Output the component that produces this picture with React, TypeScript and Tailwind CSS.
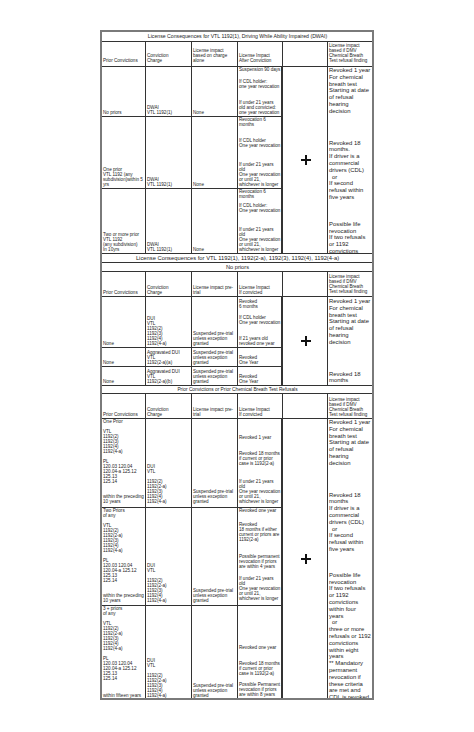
import React from "react";

function Ln({ t, className = "" }: { t: string[]; className?: string }) {
  return (
    <div className={className}>
      {t.map((s, i) => (
        <div key={i} className={s.startsWith(" ") ? "whitespace-nowrap pl-[3px]" : "whitespace-nowrap"}>
          {s.trim() === "" ? "\u00a0" : s.trim()}
        </div>
      ))}
    </div>
  );
}

const SM = "text-[4.6px] leading-[5px]";
const BIG = "text-[5.9px] leading-[6.8px]";

function C({ children, className = "" }: { children?: React.ReactNode; className?: string }) {
  return <div className={`bg-white overflow-hidden min-w-0 min-h-0 text-[#1c1c1c] pl-[1px] ${className}`}>{children}</div>;
}

function Plus() {
  return (
    <svg width="10" height="10" viewBox="0 0 10 10">
      <rect x="4" y="0" width="2" height="10" fill="#111" />
      <rect x="0" y="4" width="10" height="2" fill="#111" />
    </svg>
  );
}

const col6Head = ["License impact", "based if DMV", "Chemical Breath", "Test refusal finding"];

const reviewA = ["Revoked 1 year", "For chemical", "breath test", "Starting at date", "of refusal", "hearing", "decision"];
const reviewB = ["Revoked 18", "months.", "If driver is a", "commercial", "drivers (CDL)", " or", "If second", "refusal within", "five years"];

const under21 = ["If under 21 years", "old", "One year revocation", "or until 21,", "whichever is longer"];
const dui = ["DUI", "VTL", "", "1192(2)", "1192(2-a)", "1192(3)", "1192(4)", "1192(4-a)"];
const susp = ["Suspended pre-trial", "unless exception", "granted"];
const plList = ["", "PL", "120.03 120.04", "120.04-a 125.12", "125.13", "125.14"];

export default function App() {
  return (
    <div className="min-h-[732px] bg-white pt-[30px] font-['Liberation_Sans',Arial,sans-serif]">
      <div className="mx-auto w-[274px] border-2 border-[#7a7a7a] bg-[#333] grid gap-px grid-cols-[43px_45px_45px_44px_44px_44px] grid-rows-[9px_24px_49px_71px_64px_8px_8px_24px_50px_18px_18px_7px_24px_88px_97px_92px]">
        {/* Section 1 */}
        <C className="col-span-6 text-center text-[5.2px] leading-[9px] pl-0">
          License Consequences for VTL 1192(1), Driving While Ability Impaired (DWAI)
        </C>
        <C className={`${SM} flex flex-col justify-end pb-[3px]`}><Ln t={["Prior Convictions"]} /></C>
        <C className={`${SM} flex flex-col justify-end pb-[3px]`}><Ln t={["Conviction", "Charge"]} /></C>
        <C className={`${SM} flex flex-col justify-end pb-[3px]`}><Ln t={["License impact", "based on charge", "alone"]} /></C>
        <C className={`${SM} flex flex-col justify-end pb-[3px]`}><Ln t={["License Impact", "After Conviction"]} /></C>
        <C />
        <C className={`${SM} flex flex-col justify-end pb-[3px]`}><Ln t={col6Head} /></C>

        <C className={`${SM} flex flex-col justify-end pb-[1.5px]`}><Ln t={["No priors"]} /></C>
        <C className={`${SM} flex flex-col justify-end pb-[1.5px]`}><Ln t={["DWAI", "VTL 1192(1)"]} /></C>
        <C className={`${SM} flex flex-col justify-end pb-[1.5px]`}><Ln t={["None"]} /></C>
        <C className={`${SM} flex flex-col pb-[1.5px] border-r border-[#333]`}>
          <Ln t={["Suspension 90 days"]} />
          <Ln className="mt-[6.5px]" t={["If CDL holder:", "one year revocation"]} />
          <Ln className="mt-auto" t={["If under 21 years", "old and convicted:", "one year revocation"]} />
        </C>
        <C className="row-span-3 flex items-center justify-center pl-0"><Plus /></C>
        <C className={`row-span-3 ${BIG}`}>
          <Ln t={reviewA} />
          <Ln className="mt-[25px]" t={reviewB} />
          <Ln className="mt-[20px]" t={["Possible life", "revocation", "If two refusals", "or 1192", "convictions"]} />
        </C>

        <C className={`${SM} flex flex-col justify-end pb-[1.5px]`}><Ln t={["One prior", "VTL 1192 (any", "subdivision)within 5", "yrs"]} /></C>
        <C className={`${SM} flex flex-col justify-end pb-[1.5px]`}><Ln t={["DWAI", "VTL 1192(1)"]} /></C>
        <C className={`${SM} flex flex-col justify-end pb-[1.5px]`}><Ln t={["None"]} /></C>
        <C className={`${SM} flex flex-col pb-[1.5px] border-r border-[#333]`}>
          <Ln t={["Revocation 6", "months"]} />
          <Ln className="mt-[11px]" t={["If CDL holder", "One year revocation"]} />
          <Ln className="mt-auto" t={under21} />
        </C>

        <C className={`${SM} flex flex-col justify-end pb-[1.5px]`}><Ln t={["Two or more prior", "VTL 1192", "(any subdivision)", "In 10yrs"]} /></C>
        <C className={`${SM} flex flex-col justify-end pb-[1.5px]`}><Ln t={["DWAI", "VTL 1192(1)"]} /></C>
        <C className={`${SM} flex flex-col justify-end pb-[1.5px]`}><Ln t={["None"]} /></C>
        <C className={`${SM} flex flex-col pb-[1.5px] border-r border-[#333]`}>
          <Ln t={["Revocation 6", "months"]} />
          <Ln className="mt-[4px]" t={["If CDL holder:", "One year revocation"]} />
          <Ln className="mt-auto" t={under21} />
        </C>

        {/* Section 2 */}
        <C className="col-span-6 text-center text-[5.8px] leading-[8px] pl-0">
          License Consequences for VTL 1192(1), 1192(2-a), 1192(3), 1192(4), 1192(4-a)
        </C>
        <C className="col-span-6 text-center text-[5.7px] leading-[8px] pl-0">No priors</C>
        <C className={`${SM} flex flex-col justify-end pb-[1px]`}><Ln t={["Prior Convictions"]} /></C>
        <C className={`${SM} flex flex-col justify-end pb-[1px]`}><Ln t={["Conviction", "Charge"]} /></C>
        <C className={`${SM} flex flex-col justify-end pb-[1px]`}><Ln t={["License impact pre-", "trial"]} /></C>
        <C className={`${SM} flex flex-col justify-end pb-[1px]`}><Ln t={["License Impact", "If convicted"]} /></C>
        <C />
        <C className={`${SM} flex flex-col justify-end pb-[2px]`}><Ln t={col6Head} /></C>

        <C className={`${SM} flex flex-col justify-end pb-[1px]`}><Ln t={["None"]} /></C>
        <C className={`${SM} flex flex-col justify-end pb-[1px]`}><Ln t={["DUI", "VTL", "1192(2)", "1192(3)", "1192(4)", "1192(4-a)"]} /></C>
        <C className={`${SM} flex flex-col justify-end pb-[1px]`}><Ln t={susp} /></C>
        <C className={`${SM} flex flex-col pt-[2px] pb-[1px] border-r border-[#333]`}>
          <Ln t={["Revoked", "6 months"]} />
          <Ln className="mt-[5.5px]" t={["If CDL holder", "One year revocation"]} />
          <Ln className="mt-auto" t={["If 21 years old", "revoked one year"]} />
        </C>
        <C className="row-span-3 flex items-center justify-center pl-0"><Plus /></C>
        <C className={`row-span-3 pt-[1px] ${BIG}`}>
          <Ln t={reviewA} />
          <Ln className="mt-[25px]" t={["Revoked 18", "months"]} />
        </C>

        <C className={`${SM} flex flex-col justify-end pb-[1px]`}><Ln t={["None"]} /></C>
        <C className={`${SM} flex flex-col justify-end pb-[1px]`}><Ln t={["Aggravated DUI", "VTL", "1192(2-a)(a)"]} /></C>
        <C className={`${SM} flex flex-col justify-end pb-[1px]`}><Ln t={susp} /></C>
        <C className={`${SM} flex flex-col justify-end pb-[1px] border-r border-[#333]`}><Ln t={["Revoked", "One Year"]} /></C>

        <C className={`${SM} flex flex-col justify-end pb-[1px]`}><Ln t={["None"]} /></C>
        <C className={`${SM} flex flex-col justify-end pb-[1px]`}><Ln t={["Aggravated DUI", "VTL", "1192(2-a)(b)"]} /></C>
        <C className={`${SM} flex flex-col justify-end pb-[1px]`}><Ln t={susp} /></C>
        <C className={`${SM} flex flex-col justify-end pb-[1px] border-r border-[#333]`}><Ln t={["Revoked", "One Year"]} /></C>

        {/* Section 3 */}
        <C className="col-span-6 text-center text-[4.8px] leading-[7px] pl-0">
          Prior Convictions or Prior Chemical Breath Test Refusals
        </C>
        <C className={`${SM} flex flex-col justify-end pb-[1.5px]`}><Ln t={["Prior Convictions"]} /></C>
        <C className={`${SM} flex flex-col justify-end pb-[1.5px]`}><Ln t={["Conviction", "Charge"]} /></C>
        <C className={`${SM} flex flex-col justify-end pb-[1.5px]`}><Ln t={["License impact pre-", "trial"]} /></C>
        <C className={`${SM} flex flex-col justify-end pb-[1.5px]`}><Ln t={["License Impact", "If convicted"]} /></C>
        <C />
        <C className={`${SM} flex flex-col justify-end pb-[1.5px]`}><Ln t={col6Head} /></C>

        <C className={`${SM} flex flex-col pb-[3px]`}>
          <Ln t={["One Prior", "", "VTL", "1192(2)", "1192(3)", "1192(4)", "1192(4-a)", ...plList]} />
          <Ln className="mt-auto" t={["within the preceding", "10 years"]} />
        </C>
        <C className={`${SM} flex flex-col justify-end pb-[3px]`}><Ln t={dui} /></C>
        <C className={`${SM} flex flex-col justify-end pb-[3px]`}><Ln t={susp} /></C>
        <C className={`${SM} flex flex-col pb-[3px] border-r border-[#333]`}>
          <Ln className="mt-[15.5px]" t={["Revoked 1 year"]} />
          <Ln className="mt-[11px]" t={["Revoked 18 months", "if current or prior", "case is 1192(2-a)"]} />
          <Ln className="mt-auto" t={under21} />
        </C>
        <C className="row-span-3 flex items-center justify-center pl-0"><Plus /></C>
        <C className={`row-span-3 ${BIG}`}>
          <Ln t={reviewA} />
          <Ln className="mt-[25px]" t={["Revoked 18", "months", "If driver is a", "commercial", "drivers (CDL)", " or", "If second", "refusal within", "five years"]} />
          <Ln
            className="mt-[19px]"
            t={[
              "Possible life",
              "revocation",
              "If two refusals",
              "or 1192",
              "convictions",
              "within four",
              "years",
              " or",
              "three or more",
              "refusals or 1192",
              "convictions",
              "within eight",
              "years",
              "** Mandatory",
              "permanent",
              "revocation if",
              "these criteria",
              "are met and",
              "CDL is revoked",
            ]}
          />
        </C>

        <C className={`${SM} flex flex-col pb-[2.5px]`}>
          <Ln t={["Two Priors", "of any", "", "VTL", "1192(2)", "1192(2-a)", "1192(3)", "1192(4)", "1192(4-a)", ...plList]} />
          <Ln className="mt-auto" t={["within the preceding", "10 years"]} />
        </C>
        <C className={`${SM} flex flex-col justify-end pb-[2.5px]`}><Ln t={dui} /></C>
        <C className={`${SM} flex flex-col justify-end pb-[2.5px]`}><Ln t={susp} /></C>
        <C className={`${SM} flex flex-col pb-[2.5px] border-r border-[#333]`}>
          <Ln t={["Revoked one year"]} />
          <Ln className="mt-[9px]" t={["Revoked", "18 months if either", "current or priors are", "1192(2-a)"]} />
          <Ln className="mt-[11.5px]" t={["Possible permanent", "revocation if priors", "are within 4 years"]} />
          <Ln className="mt-[7px]" t={under21} />
        </C>

        <C className={`${SM} flex flex-col pb-[0.5px]`}>
          <Ln t={["3 + priors", "of any", "", "VTL", "1192(2)", "1192(2-a)", "1192(3)", "1192(4)", "1192(4-a)", ...plList]} />
          <Ln className="mt-auto" t={["within fifteen years"]} />
        </C>
        <C className={`${SM} flex flex-col justify-end pb-[0.5px]`}><Ln t={dui} /></C>
        <C className={`${SM} flex flex-col justify-end pb-[0.5px]`}><Ln t={susp} /></C>
        <C className={`${SM} flex flex-col pb-[0.5px] border-r border-[#333]`}>
          <Ln className="mt-[39px]" t={["Revoked one year"]} />
          <Ln className="mt-[10.5px]" t={["Revoked 18 months", "if current or prior", "case is 1192(2-a)"]} />
          <Ln className="mt-[6px]" t={["Possible Permanent", "revocation if priors", "are within 8 years"]} />
        </C>
      </div>
    </div>
  );
}
